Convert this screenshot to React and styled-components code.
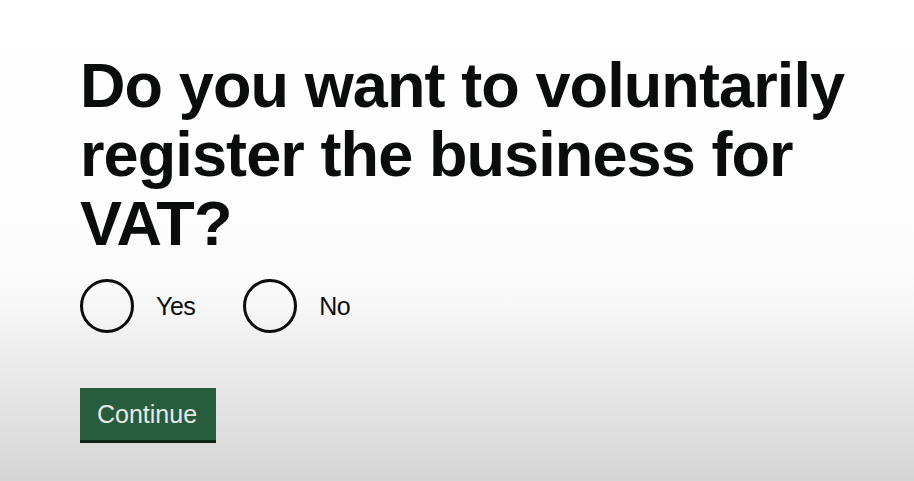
import React from "react";
import styled, { createGlobalStyle } from "styled-components";

const GlobalStyle = createGlobalStyle`
    html, body {
        margin: 0;
        padding: 0;
    }
    body {
        font-family: "Liberation Sans", Arial, sans-serif;
        color: #0b0c0c;
    }
`;

const Page = styled.main`
    min-height: 100vh;
    box-sizing: border-box;
    padding: 51px 0 0 80px;
    background: linear-gradient(
        to bottom,
        #ffffff 0%,
        #fcfcfc 56%,
        #f7f7f7 63%,
        #ececec 75%,
        #d5d5d5 100%
    );
`;

const Heading = styled.h1`
    margin: 0;
    font-size: 63px;
    line-height: 69px;
    font-weight: 700;
    letter-spacing: -0.9px;
    max-width: 780px;
`;

const RadioGroup = styled.div`
    display: flex;
    align-items: center;
    gap: 48px;
    margin-top: 21px;
`;

const RadioItem = styled.label`
    display: flex;
    align-items: center;
    gap: 22px;
    cursor: pointer;
`;

const Circle = styled.span`
    display: block;
    width: 54px;
    height: 54px;
    box-sizing: border-box;
    border: 3px solid #0b0c0c;
    border-radius: 50%;
    background: ${(p) => (p.checked ? "radial-gradient(#0b0c0c 40%, transparent 42%)" : "transparent")};
`;

const LabelText = styled.span`
    font-size: 25px;
    line-height: 1;
    letter-spacing: -0.5px;
    color: #0b0c0c;
`;

const Button = styled.button`
    display: block;
    margin-top: 55px;
    height: 52px;
    padding: 0 19px 0 17px;
    border: 0;
    border-radius: 0;
    background: #275d3c;
    box-shadow: 0 3px 0 #0c2416;
    color: #e8e8e8;
    font-family: "Liberation Sans", Arial, sans-serif;
    font-size: 25px;
    cursor: pointer;
`;

export default function App() {
    const options = ["Yes", "No"];

    return (
        <>
            <GlobalStyle />
            <Page>
                <Heading>Do you want to voluntarily register the business for VAT?</Heading>
                <RadioGroup>
                    {options.map((o) => (
                        <RadioItem key={o}>
                            <Circle />
                            <LabelText>{o}</LabelText>
                        </RadioItem>
                    ))}
                </RadioGroup>
                <Button>Continue</Button>
            </Page>
        </>
    );
}
